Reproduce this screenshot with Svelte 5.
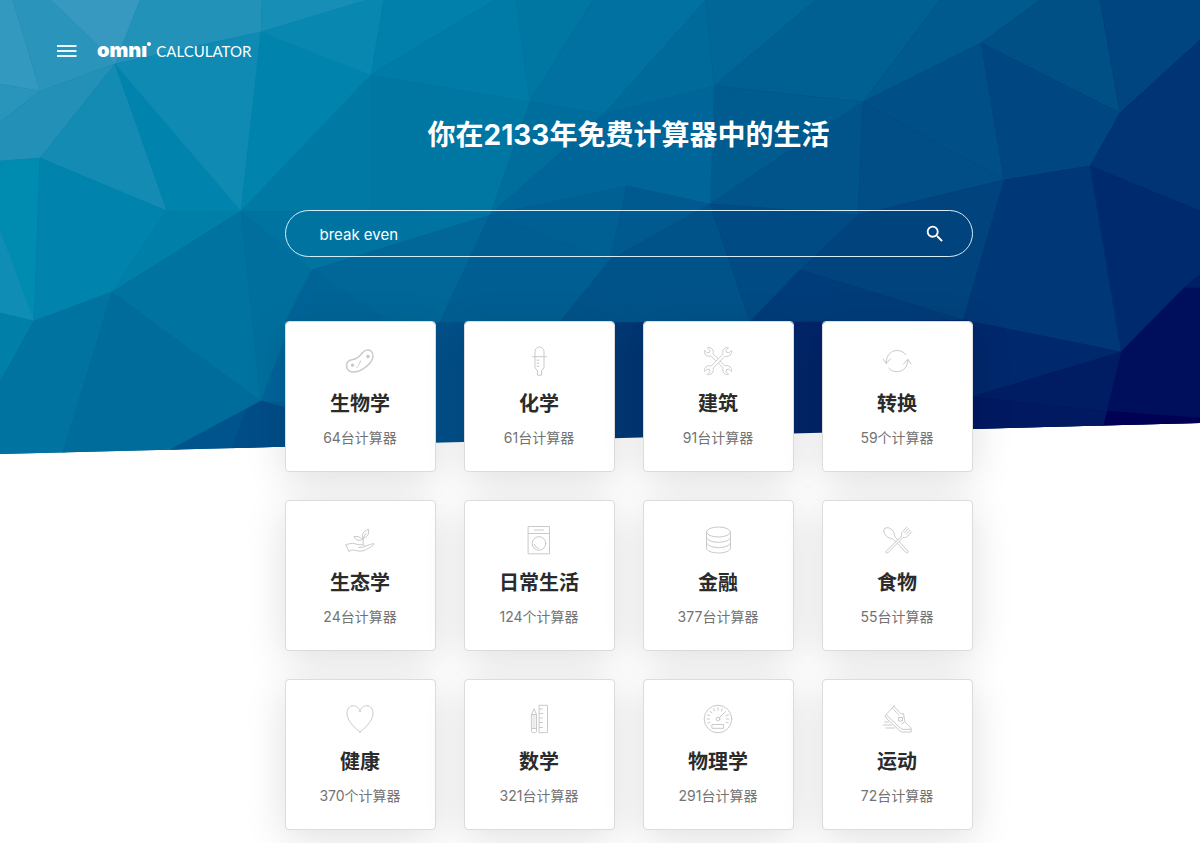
<script lang="ts">
	type Category = { icon: string; name: string; count: string };

	const categories: Category[] = [
		{ icon: 'biology', name: '生物学', count: '64台计算器' },
		{ icon: 'chemistry', name: '化学', count: '61台计算器' },
		{ icon: 'construction', name: '建筑', count: '91台计算器' },
		{ icon: 'conversion', name: '转换', count: '59个计算器' },
		{ icon: 'ecology', name: '生态学', count: '24台计算器' },
		{ icon: 'everyday', name: '日常生活', count: '124个计算器' },
		{ icon: 'finance', name: '金融', count: '377台计算器' },
		{ icon: 'food', name: '食物', count: '55台计算器' },
		{ icon: 'health', name: '健康', count: '370个计算器' },
		{ icon: 'math', name: '数学', count: '321台计算器' },
		{ icon: 'physics', name: '物理学', count: '291台计算器' },
		{ icon: 'sports', name: '运动', count: '72台计算器' }
	];

	// low-poly backdrop: [points, colour], painted in order
	const facets: [string, string][] = [
		['0,0 13,0 40,91 0,84', '#3499be'],
		['13,0 51,0 97,44 115,64 40,91', '#2b94ba'],
		['51,0 140,0 115,64 97,44', '#3799bf'],
		['140,0 262,0 261,32 115,64', '#2292b8'],
		['0,84 40,91 0,122', '#2a95ba'],
		['0,122 40,91 115,64 40,158 0,161', '#2391b7'],
		['115,64 40,158 167,211', '#148bb3'],
		['115,64 167,211 241,211', '#0084ad'],
		['115,64 261,32 241,211', '#0e8ab3'],
		['261,32 371,75 241,211', '#0084ad'],
		['262,0 367,0 261,32', '#168eb5'],
		['367,0 384,0 371,75 261,32', '#0888b1'],
		['384,0 495,0 371,75', '#0080aa'],
		['371,75 371,211 241,211', '#007aa5'],
		['371,75 530,102 490,215 371,211', '#0077a3'],
		['495,0 516,0 530,102 371,75', '#007ba7'],
		['516,0 593,0 530,102', '#0077a3'],
		['593,0 706,0 604,114 530,102', '#0071a0'],
		['706,0 714,86 604,114', '#006b9b'],
		['706,0 816,0 714,86', '#006798'],
		['816,0 940,0 863,102 714,86', '#006092'],
		['940,0 1040,0 981,43 863,102', '#005a8d'],
		['1040,0 1100,0 1120,113 981,43', '#005086'],
		['1100,0 1200,0 1200,40 1120,113', '#00457f'],
		['863,102 981,43 1004,180', '#004f86'],
		['981,43 1120,113 1090,166 1004,180', '#004680'],
		['1120,113 1200,40 1200,211 1090,166', '#003475'],
		['1090,166 1200,211 1200,275 1184,288 1121,352', '#002a6e'],
		['1200,275 1200,300 1184,288', '#001f66'],
		['1004,180 1090,166 1121,352 963,320', '#003776'],
		['1184,288 1200,288 1200,430 1100,430 1121,352', '#000f5c'],
		['1105,411 1200,418 1200,430 1100,430', '#000154'],
		['963,320 1121,352 971,397', '#00286c'],
		['971,397 1121,352 1102,430 971,440', '#001d64'],
		['971,397 1105,411 1100,430 971,440', '#001961'],
		['714,86 863,102 710,204', '#005b8f'],
		['863,102 858,215 710,204', '#00548a'],
		['863,102 1004,180 858,215', '#004e85'],
		['530,102 604,114 490,215', '#006e9d'],
		['604,114 714,86 710,204 627,186 490,215', '#00669a'],
		['490,215 627,186 610,260', '#006093'],
		['627,186 710,204 610,260', '#005a8f'],
		['1004,180 858,215 800,270 963,320', '#00437d'],
		['0,161 40,158 34,321 0,313', '#008bb1'],
		['0,230 34,321 0,313', '#108db4'],
		['40,158 167,211 112,292 34,321', '#0083ac'],
		['167,211 241,211 112,292', '#0080a9'],
		['0,313 34,321 0,382', '#007fa9'],
		['34,321 112,292 65,455 0,455 0,382', '#0073a0'],
		['112,292 261,401 170,455 62,455', '#006c9b'],
		['112,292 241,211 261,401', '#0073a0'],
		['241,211 312,270 261,401', '#006f9e'],
		['241,211 371,211 490,215 312,270', '#0073a1'],
		['490,215 440,322 390,322 312,270', '#006798'],
		['312,270 390,322 285,322', '#006496'],
		['312,270 285,402 261,401', '#00649a'],
		['261,401 300,412 300,455 160,455', '#00548d'],
		['246,410 261,401 300,412 300,455 230,455', '#004d88'],
		['490,215 610,260 560,322 440,322', '#005e92'],
		['610,260 710,204 750,322 560,322', '#005389'],
		['710,204 858,215 800,270 750,322', '#004b84'],
		['750,322 800,270 963,320', '#003c79']
	];
</script>

{#snippet biology()}
	<path stroke-width="1.5" d="M7 13.7C11 13 14.5 10.5 17 7.2C19.5 3.8 23.5 3 26.2 5.3C29.2 8 28.4 13 25 17C20.5 22.5 13 26.8 7 26C2.8 25.5 1 22 1.6 18.7C2.2 15.5 4 14 7 13.7Z" />
	<circle cx="23" cy="10.5" r="1.4" fill="#c9c9c9" />
	<circle cx="7.5" cy="19.2" r="1.2" fill="#c9c9c9" />
	<path d="M15.5 15C15.5 17 13.7 17 13.5 19.5M11.5 21.5L12.5 20.7" />
{/snippet}

{#snippet chemistry()}
	<path d="M11 10.7V5.5a4.5 4.5 0 0 1 9 0V10.7M11 10.7V21.5L13.5 25V29.2H17.5V25L20 21.5V10.7M8.7 10.7H22.5M13 14.2H15M13 17.2H15M13 20.2H15" />
{/snippet}

{#snippet wrench()}
	<path fill="#fff" d="M13.2 5.5C10.7 4.5 9.7 1.5 10.3-.8C10.7-2.2 11.5-3.2 12.8-3.8V.2L15 1.6L17.2 .2V-3.8C18.5-3.2 19.3-2.2 19.7-.8C20.3 1.5 19.3 4.5 16.8 5.5V24.5C19.3 25.5 20.3 28.5 19.7 30.8C19.3 32.2 18.5 33.2 17.2 33.8V29.8L15 28.4L12.8 29.8V33.8C11.5 33.2 10.7 32.2 10.3 30.8C9.7 28.5 10.7 25.5 13.2 24.5Z" />
{/snippet}

{#snippet construction()}
	<g transform="rotate(-45 15 15) translate(1.5 1.5) scale(0.9)">{@render wrench()}</g>
	<g transform="rotate(45 15 15) translate(1.5 1.5) scale(0.9)">{@render wrench()}</g>
{/snippet}

{#snippet conversion()}
	<path d="M4.2 17.5C3.8 10 8.5 4.5 15 4.5C18.8 4.5 21.8 6 23.8 8.7M1 13L4.2 17.5L8.3 13M25.8 13.5C26 20.5 21.5 25.7 15 25.7C11.5 25.7 8.8 24.5 6.7 22M21.5 18L25.8 13.2L29 18" />
{/snippet}

{#snippet ecology()}
	<path d="M18 13C16 10 18 6.5 23.3 4.2C24.5 9 22.5 12.5 18 13ZM17.5 14.2C14.5 11.5 11.5 11 9 11.7C11 15.5 14.5 16.5 17.5 14.2ZM18.2 13V19.5M18 13L21 8.5" />
	<path d="M1 20L4 26.5M1 20C3.5 18.5 7 18 10 18.8C13 19.7 15 20 18.5 19.8C20.5 20 20 22 18 22.2L13.5 22.5M19.8 21.5C23 20.5 26 18.5 29.2 18.8C28.5 21 22 24 19 25.5C15.5 27 12 25.5 8.5 25C6.5 24.8 5.2 25.5 4 26.5" />
{/snippet}

{#snippet everyday()}
	<path d="M4.5 1.5H25.5V28.8H4.5ZM4.5 8.5H25.5M10.5 5H19.5M10.5 19.5C11 21.7 12.5 23 14.5 23.2" />
	<circle cx="15" cy="18.5" r="6.8" />
{/snippet}

{#snippet finance()}
	<ellipse cx="15.5" cy="7" rx="12" ry="5" />
	<path d="M3.5 7V23C3.5 25.8 9 28 15.5 28S27.5 25.8 27.5 23V7M3.5 12.3C3.5 15 9 17.3 15.5 17.3S27.5 15 27.5 12.3M3.5 17.6C3.5 20.3 9 22.6 15.5 22.6S27.5 20.3 27.5 17.6" />
{/snippet}

{#snippet food()}
	<path d="M2.5 3.7C5 1 10.5 3.5 12 8C12.6 10 12.5 11 13.5 12.5L25.8 26C26.8 27.2 25.3 28.7 24.2 27.7L11.5 14.5C10.5 13.5 9 13.7 7.5 13C3 11.5 .5 6.5 2.5 3.7Z" />
	<path fill="#fff" d="M25 2L20.7 6.5C19.3 8.3 19.3 9.5 20 10.8L4.2 26.2C3.3 27.5 4.7 28.8 5.8 27.9L21.3 12.2C22.7 12.9 24.2 12.5 25.5 11.3L29.7 6.8M26.5 3.5L22.5 7.7M28.2 5.2L24.2 9.3" />
{/snippet}

{#snippet health()}
	<path d="M15 28C10 24 2 17 2 9.5C2 4.8 4.5 1.7 8.3 1.7C11.7 1.7 14.3 4.2 15 8C15.7 4.2 18.3 1.7 21.7 1.7C25.5 1.7 28 4.8 28 9.5C28 17 20 24 15 28Z" />
{/snippet}

{#snippet math()}
	<path d="M15.5 1.3H23.5V28.7H15.5ZM15.5 5H18.5M15.5 9.5H18.5M15.5 14H18.5M15.5 18.5H18.5M15.5 23.5H18.5" />
	<path d="M7.5 10.5L10 4.7L12.5 10.5V27.5C12.5 29.2 7.5 29.2 7.5 27.5ZM7.5 10.5H12.5M7.5 24.5H12.5" />
	<path stroke-width="0.6" d="M9.2 10.5V24.5M10.9 10.5V24.5" />
{/snippet}

{#snippet physics()}
	<circle cx="15" cy="15" r="13.8" />
	<circle cx="15" cy="15" r="1.9" />
	<path d="M16.3 13.7L22.5 7.5M9.3 20.5H20.7V24.3H9.3ZM4 15H6.5M4.5 10.7L6.8 11.7M7.2 7.2L9 9M10.7 4.7L11.6 7M15 3.8V6.3M19.3 4.7L18.4 7M25.5 10.7L23.2 11.7M26 15H23.5M4.8 19L7 18.2M25.2 19L23 18.2" />
{/snippet}

{#snippet sports()}
	<path d="M12 2L3.3 11.5L4 14L18 27C18.6 27.7 19.5 28 20.5 28H29.2V25.5C29 22 25.5 21 24.2 19.5C22 17 22.3 13 21.5 9.5C19.5 10.5 17 9 16.2 6.5C15 6 13.3 4 12 2ZM4.5 11L18.5 24.2C19.2 25 20 25.3 21 25.3H29M17 13.5H20.5V17H17ZM19.5 20L22 18.5" />
	<path stroke-dasharray="1 1" d="M10.5 4.5L17 11" />
	<path d="M2.5 18H6.5M1.5 21H9.5M4 24H12.5" />
{/snippet}

<div class="page">
	<svg class="backdrop" viewBox="0 0 1200 455" preserveAspectRatio="none" aria-hidden="true">
		<defs>
			<linearGradient id="depth" x1="0" y1="0" x2="1" y2="0">
				<stop offset="0.2" stop-color="#006096" />
				<stop offset="0.4" stop-color="#004f89" />
				<stop offset="0.53" stop-color="#003775" />
				<stop offset="0.68" stop-color="#00256a" />
				<stop offset="1" stop-color="#00105c" />
			</linearGradient>
		</defs>
		<rect width="1200" height="455" fill="url(#depth)" />
		{#each facets as [points, color]}
			<polygon {points} fill={color} stroke={color} stroke-width="0.5" />
		{/each}
	</svg>

	<header>
		<button class="menu" type="button" aria-label="菜单">
			<svg viewBox="0 0 20 14" width="20" height="14"><path d="M0 2H19.5M0 7H19.5M0 12H19.5" /></svg>
		</button>
		<a class="logo" href="/">
			<span class="brand">omnı</span><span class="dot"></span><span class="sub">CALCULATOR</span>
		</a>
	</header>

	<main>
		<h1>你在2133年免费计算器中的生活</h1>

		<form class="search" role="search" onsubmit={(event) => event.preventDefault()}>
			<input type="text" aria-label="搜索" value="break even" />
			<button type="submit" aria-label="搜索">
				<svg viewBox="0 0 24 24" width="22" height="22">
					<path d="M15.5 14h-.79l-.28-.27A6.47 6.47 0 0 0 16 9.5 6.5 6.5 0 1 0 9.5 16c1.61 0 3.09-.59 4.23-1.57l.27.28v.79l5 4.99L20.49 19l-4.99-5zm-6 0C7.01 14 5 11.99 5 9.5S7.01 5 9.5 5 14 7.01 14 9.5 11.99 14 9.5 14z" />
				</svg>
			</button>
		</form>

		<nav class="grid">
			{#each categories as category}
				<a class="card" href="/{category.icon}">
					<svg class="icon" viewBox="0 0 30 30" aria-hidden="true">
						{#if category.icon === 'biology'}{@render biology()}
						{:else if category.icon === 'chemistry'}{@render chemistry()}
						{:else if category.icon === 'construction'}{@render construction()}
						{:else if category.icon === 'conversion'}{@render conversion()}
						{:else if category.icon === 'ecology'}{@render ecology()}
						{:else if category.icon === 'everyday'}{@render everyday()}
						{:else if category.icon === 'finance'}{@render finance()}
						{:else if category.icon === 'food'}{@render food()}
						{:else if category.icon === 'health'}{@render health()}
						{:else if category.icon === 'math'}{@render math()}
						{:else if category.icon === 'physics'}{@render physics()}
						{:else}{@render sports()}{/if}
					</svg>
					<h2>{category.name}</h2>
					<p>{category.count}</p>
				</a>
			{/each}
		</nav>
	</main>
</div>

<style>
	:global(body) {
		margin: 0;
		background: #fff;
	}

	.page {
		position: relative;
		font-family: Inter, 'Noto Sans CJK SC', sans-serif;
		color: #2b2b2b;
		overflow: hidden;
	}

	.backdrop {
		position: absolute;
		top: 0;
		left: 0;
		width: 100%;
		height: 455px;
		clip-path: polygon(0 0, 100% 0, 100% 423px, 0 454px);
	}

	header {
		position: relative;
		display: flex;
		align-items: center;
		gap: 20px;
		height: 101px;
		padding: 0 57px;
	}

	button {
		display: flex;
		padding: 0;
		border: none;
		background: none;
		cursor: pointer;
	}

	.menu path {
		stroke: #e8f8ff;
		stroke-width: 2;
	}

	.logo {
		display: flex;
		align-items: baseline;
		color: #fff;
		text-decoration: none;
		line-height: 24px;
	}

	.brand {
		font-size: 20px;
		font-weight: 900;
	}

	.dot {
		align-self: flex-start;
		width: 4px;
		height: 4px;
		margin-top: 4px;
		border-radius: 50%;
		background: #fff;
	}

	.sub {
		margin-left: 5px;
		font-family: Lato, sans-serif;
		font-size: 15px;
	}

	main {
		position: relative;
		max-width: 688px;
		margin: 0 auto;
		padding: 14px 16px 13px 73px;
	}

	h1 {
		margin: 0;
		font-size: 28px;
		font-weight: 700;
		line-height: 40px;
		text-align: center;
		color: #fff;
	}

	.search {
		display: flex;
		align-items: center;
		box-sizing: border-box;
		height: 47px;
		margin: 55px 0 64px;
		padding: 0 26px 0 34px;
		border: 1px solid #d5edf8;
		border-radius: 24px;
	}

	input {
		flex: 1;
		min-width: 0;
		padding: 2px 0 0;
		border: none;
		outline: none;
		background: none;
		font: inherit;
		font-size: 15px;
		color: #fff;
	}

	.search path {
		fill: #fff;
	}

	.grid {
		display: grid;
		grid-template-columns: repeat(4, 1fr);
		gap: 28px;
	}

	.card {
		display: flex;
		flex-direction: column;
		align-items: center;
		justify-content: center;
		box-sizing: border-box;
		aspect-ratio: 1;
		border: 1px solid #dcdcdc;
		border-radius: 4px;
		background: #fff;
		background-clip: padding-box;
		box-shadow: 0 8px 40px rgba(0, 0, 0, 0.13);
		color: inherit;
		text-align: center;
		text-decoration: none;
	}

	.icon {
		width: 30px;
		height: 30px;
		overflow: visible;
		fill: none;
		stroke: #c9c9c9;
		stroke-width: 1;
		stroke-linecap: round;
		stroke-linejoin: round;
	}

	h2 {
		margin: 13px 0 9px;
		font-size: 20px;
		font-weight: 600;
		line-height: 30px;
	}

	p {
		margin: 0;
		font-size: 14px;
		line-height: 20px;
		color: #737373;
	}

	@media (max-width: 700px) {
		main {
			padding: 14px 16px 13px;
		}

		.grid {
			grid-template-columns: repeat(2, 1fr);
		}
	}
</style>
